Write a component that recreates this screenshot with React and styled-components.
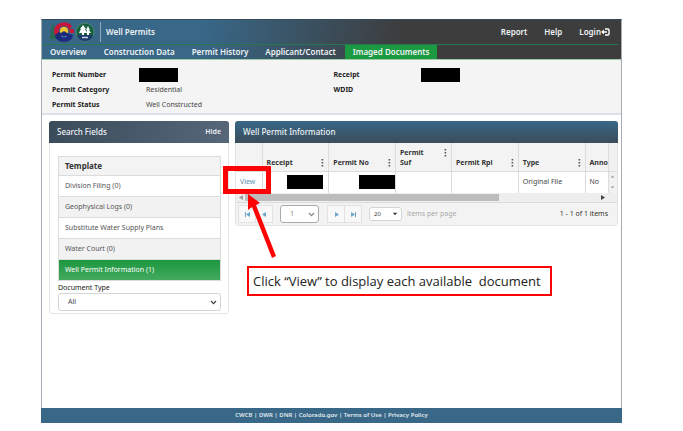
/* eslint-disable react/prop-types */
import { useState } from 'react';
import styled, { createGlobalStyle } from 'styled-components';

const BLUE = '#386787';
const GREEN = '#1c9a41';
const BORDER = '#dcdcdc';
const RED = '#fd0303';

const NAV_LINKS = [
  'Overview',
  'Construction Data',
  'Permit History',
  'Applicant/Contact',
  'Imaged Documents',
];

const TEMPLATES = [
  'Division Filing (0)',
  'Geophysical Logs (0)',
  'Substitute Water Supply Plans',
  'Water Court (0)',
  'Well Permit Information (1)',
];

const COLUMNS = ['Receipt', 'Permit No', 'Permit\nSuf', 'Permit Rpl', 'Type'];

const FOOTER_LINKS = [
  'CWCB',
  'DWR',
  'DNR',
  'Colorado.gov',
  'Terms of Use',
  'Privacy Policy',
];

const Logos = () => (
  <svg width="46" height="22" viewBox="0 0 46 22" aria-label="Colorado DWR">
    <path d="M4 2L6 7H5L8 12H6L9 18H5V20H3V18H0L2 12H1L3 7H2Z" fill="#2a6a55" />
    <path d="M5 11A10 9 0 0 1 23 5L20 9A5 5 0 0 0 10 11L9 14H6Z" fill="#c8153b" />
    <path d="M20 8H25V12H21Z" fill="#c8153b" />
    <circle cx="15" cy="10" r="4" fill="#f6c52f" />
    <path d="M6 14L10 11L12 12L15 10L18 12L24 14A9 7 0 0 1 6 14Z" fill="#1d2b7c" />
    <path d="M12 15Q15 17 18 15" fill="none" stroke="#5a78b4" />
    <circle cx="36" cy="11" r="9" fill="#17603f" stroke="#4d8a70" />
    <path d="M28 14H44A8 6 0 0 1 28 14Z" fill="#1d3b6c" />
    <path d="M34 4L37 8H36L38 12H35V14H33V12H30L32 8H31Z" fill="#fff" />
    <path d="M39 5L41 9H40L42 12H40V14H38V12H37L38 9H37Z" fill="#fff" />
    <path d="M33 16.5H39" stroke="#c8cfe0" strokeWidth="1.5" />
  </svg>
);

const LoginIcon = () => (
  <svg width="9" height="8" viewBox="0 0 9 8" aria-hidden="true">
    <path d="M4 1H7Q8 1 8 2V6Q8 7 7 7H4" fill="none" stroke="#fff" strokeWidth="1.4" />
    <path d="M0 4L3 1.4V3.2H6V4.8H3V6.6Z" fill="#fff" />
  </svg>
);

const Dots = () => (
  <svg width="3" height="9" viewBox="0 0 3 9" aria-hidden="true">
    <path d="M.6 1h1.6v1.5H.6zM.6 4h1.6v1.5H.6zM.6 7h1.6v1.5H.6z" fill="#555" />
  </svg>
);

const Chevron = ({ color = '#444' }) => (
  <svg width="7" height="5" viewBox="0 0 7 5" aria-hidden="true">
    <path d="M1 1L3.5 3.6L6 1" fill="none" stroke={color} strokeWidth="1.3" />
  </svg>
);

const ARROWS = {
  first: 'M1 1H2V6H1ZM6 1V6L2 3.5Z',
  prev: 'M5 1V6L1 3.5Z',
  next: 'M2 1V6L6 3.5Z',
  last: 'M1 1V6L5 3.5ZM5 1H6V6H5Z',
  up: 'M1 5H6L3.5 2Z',
  down: 'M1 2H6L3.5 5Z',
};

const Arrow = ({ type, color = '#69a7cb', size = 7 }) => (
  <svg width={size} height={size} viewBox="0 0 7 7" aria-hidden="true">
    <path d={ARROWS[type]} fill={color} />
  </svg>
);

const App = () => {
  const [template, setTemplate] = useState(TEMPLATES[4]);
  const [hidden, setHidden] = useState(false);

  return (
    <>
      <GlobalStyle />
      <SPage>
        <SWindow>
          <SHeader>
            <STopBar>
              <Logos />
              <STitle>Well Permits</STitle>
              <STopLink href="#report">Report</STopLink>
              <STopLink href="#help">Help</STopLink>
              <STopLink href="#login">
                Login
                <LoginIcon />
              </STopLink>
            </STopBar>
            <SNav>
              {NAV_LINKS.map((link) => (
                <SNavLink
                  key={link}
                  href="#nav"
                  $active={link === 'Imaged Documents'}
                >
                  {link}
                </SNavLink>
              ))}
            </SNav>
          </SHeader>

          <SSummary>
            <SFacts $label={94}>
              <dt>Permit Number</dt>
              <dd>
                <SRedacted $width={39} />
              </dd>
              <dt>Permit Category</dt>
              <dd>Residential</dd>
              <dt>Permit Status</dt>
              <dd>Well Constructed</dd>
            </SFacts>
            <SFacts $label={95}>
              <dt>Receipt</dt>
              <dd>
                <SRedacted $width={39} />
              </dd>
              <dt>WDID</dt>
              <dd />
            </SFacts>
          </SSummary>

          <SMain>
            <SPanel $grow={179}>
              <SPanelHeader $slate>
                <h2>Search Fields</h2>
                <button type="button" onClick={() => setHidden(!hidden)}>
                  Hide
                </button>
              </SPanelHeader>
              {!hidden && (
                <SFields>
                  <STemplates>
                    <thead>
                      <tr>
                        <th>Template</th>
                      </tr>
                    </thead>
                    <tbody>
                      {TEMPLATES.map((name) => (
                        <STemplateRow
                          key={name}
                          $selected={name === template}
                          onClick={() => setTemplate(name)}
                        >
                          <td>{name}</td>
                        </STemplateRow>
                      ))}
                    </tbody>
                  </STemplates>
                  <SLabel htmlFor="docType">Document Type</SLabel>
                  <SSelectBox $height={18}>
                    <select id="docType">
                      <option>All</option>
                    </select>
                    <Chevron />
                  </SSelectBox>
                </SFields>
              )}
            </SPanel>

            <SResults>
              <SPanelHeader>
                <h2>Well Permit Information</h2>
              </SPanelHeader>
              <SGridBox>
                <SGrid>
                  <colgroup>
                    <col className="view" />
                    <col />
                    <col />
                    <col className="suffix" />
                    <col />
                    <col />
                    <col className="annotated" />
                    <col className="scroll" />
                  </colgroup>
                  <thead>
                    <tr>
                      <th aria-label="Actions" />
                      {COLUMNS.map((name) => (
                        <th key={name}>
                          <SColumnTitle>
                            {name}
                            <Dots />
                          </SColumnTitle>
                        </th>
                      ))}
                      <th>Anno</th>
                      <th aria-label="Scroll" />
                    </tr>
                  </thead>
                  <tbody>
                    <tr>
                      <td>
                        <SViewLink href="#view">View</SViewLink>
                      </td>
                      <td className="receipt">
                        <SRedacted $width={36} $right />
                      </td>
                      <td>
                        <SRedacted $width={36} $right />
                      </td>
                      <td />
                      <td />
                      <td>Original File</td>
                      <td>No</td>
                      <td className="scroll">
                        <SScrollArrows>
                          <Arrow type="up" color="#999" size={5} />
                          <Arrow type="down" color="#999" size={5} />
                        </SScrollArrows>
                      </td>
                    </tr>
                  </tbody>
                </SGrid>
                <SScrollbar>
                  <Arrow type="prev" color="#999" />
                  <SThumb />
                  <Arrow type="next" color="#444" />
                </SScrollbar>
                <SPager>
                  <SPageButtons>
                    <button type="button" aria-label="First page">
                      <Arrow type="first" />
                    </button>
                    <button type="button" aria-label="Previous page">
                      <Arrow type="prev" />
                    </button>
                  </SPageButtons>
                  <SSelectBox $width={39} $height={18} $strong>
                    <select aria-label="Page">
                      <option>1</option>
                    </select>
                    <Chevron color="#888" />
                  </SSelectBox>
                  <SPageButtons>
                    <button type="button" aria-label="Next page">
                      <Arrow type="next" />
                    </button>
                    <button type="button" aria-label="Last page">
                      <Arrow type="last" />
                    </button>
                  </SPageButtons>
                  <SSelectBox $width={33} $height={14} $small>
                    <select id="pageSize">
                      <option>20</option>
                    </select>
                    <Arrow type="down" color="#333" size={6} />
                  </SSelectBox>
                  <label htmlFor="pageSize">items per page</label>
                  <SCount>1 - 1 of 1 items</SCount>
                </SPager>
              </SGridBox>
              <SHighlight />
              <SPointer viewBox="0 0 29 64" aria-hidden="true">
                <path d="M1 0L13 9L9 11L29 62L25 64L5 13L1 16Z" fill={RED} />
              </SPointer>
              <SCallout>Click “View” to display each available  document</SCallout>
            </SResults>
          </SMain>

          <SFooter>
            {FOOTER_LINKS.map((link, i) => (
              <span key={link}>
                {i > 0 && ' | '}
                <a href="#footer">{link}</a>
              </span>
            ))}
          </SFooter>
        </SWindow>
      </SPage>
    </>
  );
};

const GlobalStyle = createGlobalStyle`
  * {
    box-sizing: border-box;
  }
  body {
    margin: 0;
    background: #fff;
    color: #444;
    font: 7px/10px 'Noto Sans', 'Open Sans', sans-serif;
  }
  a {
    color: inherit;
    text-decoration: none;
  }
  button,
  select {
    margin: 0;
    padding: 0;
    border: 0;
    background: none;
    color: inherit;
    font: inherit;
    appearance: none;
  }
  h1,
  h2,
  dl,
  dd {
    margin: 0;
  }
  svg {
    flex: none;
  }
`;

const SPage = styled.div`
  display: flex;
  min-height: 100vh;
  padding: 19px 61px 8px 41px;
`;

const SWindow = styled.div`
  display: flex;
  flex: 1;
  flex-direction: column;
  min-width: 0;
  border: 1px solid #a4abb2;
  border-top-color: #34495a;
`;

const SHeader = styled.header`
  border-bottom: 1px solid #9ccbaa;
  background: linear-gradient(100deg, ${BLUE} 28%, #3d3d3d 62%);
  color: #eef2f4;
  font-size: 8px;
  font-weight: 600;
`;

const STopBar = styled.div`
  display: flex;
  align-items: center;
  height: 25px;
  margin-right: 3px;
  padding: 0 8px 0 7px;
  border-bottom: 1px solid #27764f;
`;

const STitle = styled.h1`
  flex: 1;
  margin-left: 5px;
  padding: 4px 0 4px 5px;
  border-left: 1px solid #8fa9bb;
  font-size: 8px;
  font-weight: 600;
  line-height: 12px;
`;

const STopLink = styled.a`
  display: flex;
  align-items: center;
  margin-left: 17px;
  font-size: 8px;
`;

const SNav = styled.nav`
  display: flex;
  gap: 1px;
`;

const SNavLink = styled.a`
  padding: 0 8px;
  background: ${({ $active }) => ($active ? GREEN : 'none')};
  line-height: 14px;
`;

const SSummary = styled.section`
  display: grid;
  grid-template-columns: 281fr 297fr;
  padding: 7px 0 1px;
  border-bottom: 2px solid #dbe1e6;
  background: #f4f4f4;
`;

const SFacts = styled.dl`
  display: grid;
  grid-template-columns: ${({ $label }) => $label}px 1fr;
  grid-auto-rows: 15px;
  align-content: start;
  align-items: center;
  padding-left: 10px;
  dt {
    color: #222;
    font-weight: 700;
  }
`;

const SRedacted = styled.div`
  width: ${({ $width }) => $width}px;
  height: 14px;
  margin-left: ${({ $right }) => ($right ? 'auto' : '-7px')};
  background: #000;
`;

const SMain = styled.main`
  display: flex;
  flex: 1;
  align-items: flex-start;
  gap: 6px;
  padding: 6px 3px 8px 7px;
`;

const SPanel = styled.section`
  flex: ${({ $grow }) => $grow} 1 0;
  min-width: 0;
  border: 1px solid #e4e4e4;
  border-radius: 3px;
`;

const SResults = styled(SPanel).attrs({ $grow: 383 })`
  position: relative;
`;

const SPanelHeader = styled.div`
  display: flex;
  align-items: center;
  justify-content: space-between;
  height: 22px;
  margin: -1px -1px 0;
  padding: 0 8px;
  border-radius: 3px 3px 0 0;
  background: ${({ $slate }) =>
    $slate
      ? 'linear-gradient(100deg, #3a4b5b, #56677a)'
      : 'linear-gradient(#386887, #3b4d5b)'};
  color: #eef2f4;
  h2 {
    font-size: 8px;
    font-weight: 500;
  }
  button {
    font-weight: 600;
  }
`;

const SFields = styled.div`
  padding: 13px 7px 2px 8px;
`;

const STemplates = styled.table`
  width: 100%;
  border: 1px solid ${BORDER};
  border-collapse: collapse;
  th {
    height: 19px;
    padding: 0 6px;
    background: #f3f3f3;
    color: #333;
    font-size: 8px;
    text-align: left;
  }
`;

const STemplateRow = styled.tr`
  background: ${({ $selected }) =>
    $selected ? 'linear-gradient(#1d973f, #45aa60)' : '#fff'};
  color: ${({ $selected }) => ($selected ? '#fff' : '#555')};
  cursor: pointer;
  &:nth-child(even) {
    background: #f2f2f2;
  }
  td {
    height: 21px;
    padding: 0 6px;
    border-top: 1px solid ${BORDER};
  }
`;

const SLabel = styled.label`
  display: block;
  margin-top: 2px;
  color: #222;
`;

const SSelectBox = styled.div`
  display: flex;
  align-items: center;
  width: ${({ $width }) => ($width ? `${$width}px` : '100%')};
  height: ${({ $height }) => $height}px;
  border: 1px solid ${({ $strong }) => ($strong ? '#aaa' : '#d5d5d5')};
  border-radius: 3px;
  background: #fff;
  color: ${({ $strong }) => ($strong ? '#888' : '#444')};
  select {
    flex: 1;
    width: 0;
    height: 100%;
    padding-left: ${({ $small }) => ($small ? 4 : 9)}px;
    font-size: ${({ $small }) => ($small ? 6 : 7)}px;
  }
  svg {
    margin-right: 3px;
  }
`;

const SGridBox = styled.div`
  background: #f3f3f3;
`;

const SGrid = styled.table`
  width: 100%;
  border-collapse: collapse;
  table-layout: fixed;
  .view {
    width: 26px;
  }
  .suffix {
    width: 56px;
  }
  .annotated {
    width: 23px;
  }
  .scroll {
    width: 9px;
    padding: 0;
    background: #f1f1f1;
  }
  .receipt {
    padding-right: 5px;
  }
  th,
  td {
    overflow: hidden;
    border-left: 1px solid ${BORDER};
    text-align: left;
  }
  th:first-child,
  td:first-child {
    border-left: 0;
  }
  th {
    height: 28px;
    padding: 0 4px 3px;
    border-bottom: 1px solid ${BORDER};
    color: #333;
    font-weight: 700;
    vertical-align: bottom;
  }
  th:nth-last-child(2) {
    padding-right: 0;
  }
  td {
    height: 22px;
    padding: 0 0 0 4px;
    background: #fff;
  }
`;

const SColumnTitle = styled.div`
  display: flex;
  justify-content: space-between;
  white-space: pre;
`;

const SViewLink = styled.a`
  color: #5b8fb0;
`;

const SScrollArrows = styled.div`
  display: flex;
  flex-direction: column;
  align-items: center;
  gap: 6px;
`;

const SScrollbar = styled.div`
  display: flex;
  align-items: center;
  height: 9px;
  padding: 0 11px 0 2px;
  background: #eee;
`;

const SThumb = styled.div`
  width: 69%;
  height: 7px;
  margin-right: auto;
  background: #bdbdbd;
`;

const SPager = styled.div`
  display: flex;
  align-items: center;
  gap: 8px;
  height: 23px;
  padding: 0 9px 0 2px;
  border-top: 1px solid ${BORDER};
  label {
    margin-left: -3px;
    color: #aaa;
  }
`;

const SPageButtons = styled.div`
  display: flex;
  button {
    display: flex;
    align-items: center;
    justify-content: center;
    width: 18px;
    height: 18px;
    margin-right: -1px;
    border: 1px solid #e2e2e2;
    background: #f8f8f8;
  }
`;

const SCount = styled.span`
  margin-left: auto;
  color: #333;
`;

/* callout layer over the results grid */
const SHighlight = styled.div`
  position: absolute;
  top: 44px;
  left: -13px;
  width: 48px;
  height: 28px;
  border: 5px solid ${RED};
`;

const SPointer = styled.svg`
  position: absolute;
  top: 72px;
  left: 11px;
  width: 29px;
  height: 64px;
`;

const SCallout = styled.p`
  position: absolute;
  top: 144px;
  left: 11px;
  margin: 0;
  width: 305px;
  padding: 0 4px;
  border: 2px solid ${RED};
  background: #fff;
  color: #222;
  font: 13px/26px 'Open Sans', sans-serif;
  white-space: pre;
`;

const SFooter = styled.footer`
  margin: 0 -1px -1px;
  background: ${BLUE};
  color: #e3ebf0;
  font-size: 6px;
  font-weight: 600;
  line-height: 15px;
  text-align: center;
  white-space: pre;
`;

export default App;
